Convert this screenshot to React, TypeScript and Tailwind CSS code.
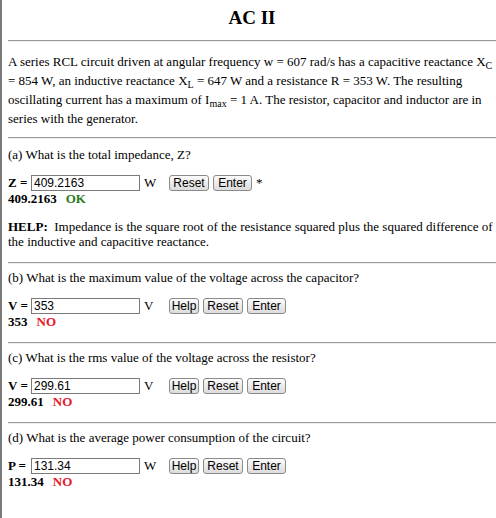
import React from "react";

const serif = { fontFamily: '"Liberation Serif", "Times New Roman", serif' };

const Btn: React.FC<{ label: string; w: string }> = ({ label, w }) => (
  <button
    className={`${w} h-[16px] rounded-[3px] border border-[#8a8a8a] bg-gradient-to-b from-[#fbfbfb] to-[#dcdcdc] text-[12px] leading-[14px] text-black`}
    style={{ fontFamily: '"Liberation Sans", Arial, sans-serif' }}
  >
    {label}
  </button>
);

type Q = {
  question: string;
  label: string;
  value: string;
  unit: string;
  help: boolean;
  ok: boolean;
  star?: boolean;
};

const questions: Q[] = [
  { question: "(a) What is the total impedance, Z?", label: "Z =", value: "409.2163", unit: "W", help: false, ok: true, star: true },
  { question: "(b) What is the maximum value of the voltage across the capacitor?", label: "V =", value: "353", unit: "V", help: true, ok: false },
  { question: "(c) What is the rms value of the voltage across the resistor?", label: "V =", value: "299.61", unit: "V", help: true, ok: false },
  { question: "(d) What is the average power consumption of the circuit?", label: "P =", value: "131.34", unit: "W", help: true, ok: false },
];

const Question: React.FC<{ q: Q }> = ({ q }) => (
  <div>
    <p className="pt-[6px] leading-[15px]">{q.question}</p>
    <div className="mt-[13px] flex items-center h-[16px]">
      <span className="font-bold w-[23px] shrink-0">{q.label}</span>
      <input
        readOnly
        value={q.value}
        className="w-[109px] h-[16px] border border-[#7a7a7a] px-[2px] text-[12px] leading-[14px] outline-none"
        style={{ fontFamily: '"Liberation Sans", Arial, sans-serif' }}
      />
      <span className="w-[29px] pl-[4px] shrink-0">{q.unit}</span>
      <div className="flex items-center gap-[4px]">
        {q.help && <Btn label="Help" w="w-[30px]" />}
        <Btn label="Reset" w="w-[40px]" />
        <Btn label="Enter" w="w-[39px]" />
        {q.star && <span className="text-[13px]">*</span>}
      </div>
    </div>
    <div className="font-bold leading-[15px]">
      {q.value}
      <span className={`ml-[9px] ${q.ok ? "text-[#2c7a1c]" : "text-[#ea1728]"}`}>{q.ok ? "OK" : "NO"}</span>
    </div>
  </div>
);

const Rule: React.FC = () => <div className="h-[2px] border-t border-[#9a9a9a] bg-[#eeeeee]" />;

export default function App() {
  return (
    <div className="w-[496px] h-[518px] bg-white border-l-2 border-[#7a7a7a] text-black text-[13px] overflow-hidden" style={serif}>
      <div className="pl-[6px]">
        <h1 className="text-center font-bold text-[19px] leading-[22px] pt-[7px]">AC II</h1>
        <div className="mt-[11px]"><Rule /></div>
        <p className="pt-[10px] leading-[19px]">
          A series RCL circuit driven at angular frequency w = 607 rad/s has a capacitive reactance X<sub className="text-[10px] leading-[0]">C</sub> = 854 W, an inductive reactance X<sub className="text-[10px] leading-[0]">L</sub> = 647 W and a resistance R = 353 W. The resulting oscillating current has a maximum of I<sub className="text-[10px] leading-[0]">max</sub> = 1 A. The resistor, capacitor and inductor are in series with the generator.
        </p>
        <div className="mt-[9px]"><Rule /></div>
        <div className="pt-[2px]">
          <Question q={questions[0]} />
        </div>
        <p className="mt-[13px] leading-[15px]">
          <b>HELP:</b>&nbsp; Impedance is the square root of the resistance squared plus the squared difference of the inductive and capacitive reactance.
        </p>
        <div className="mt-[13px]"><Rule /></div>
        <Question q={questions[1]} />
        <div className="mt-[13px]"><Rule /></div>
        <Question q={questions[2]} />
        <div className="mt-[13px]"><Rule /></div>
        <Question q={questions[3]} />
      </div>
    </div>
  );
}
